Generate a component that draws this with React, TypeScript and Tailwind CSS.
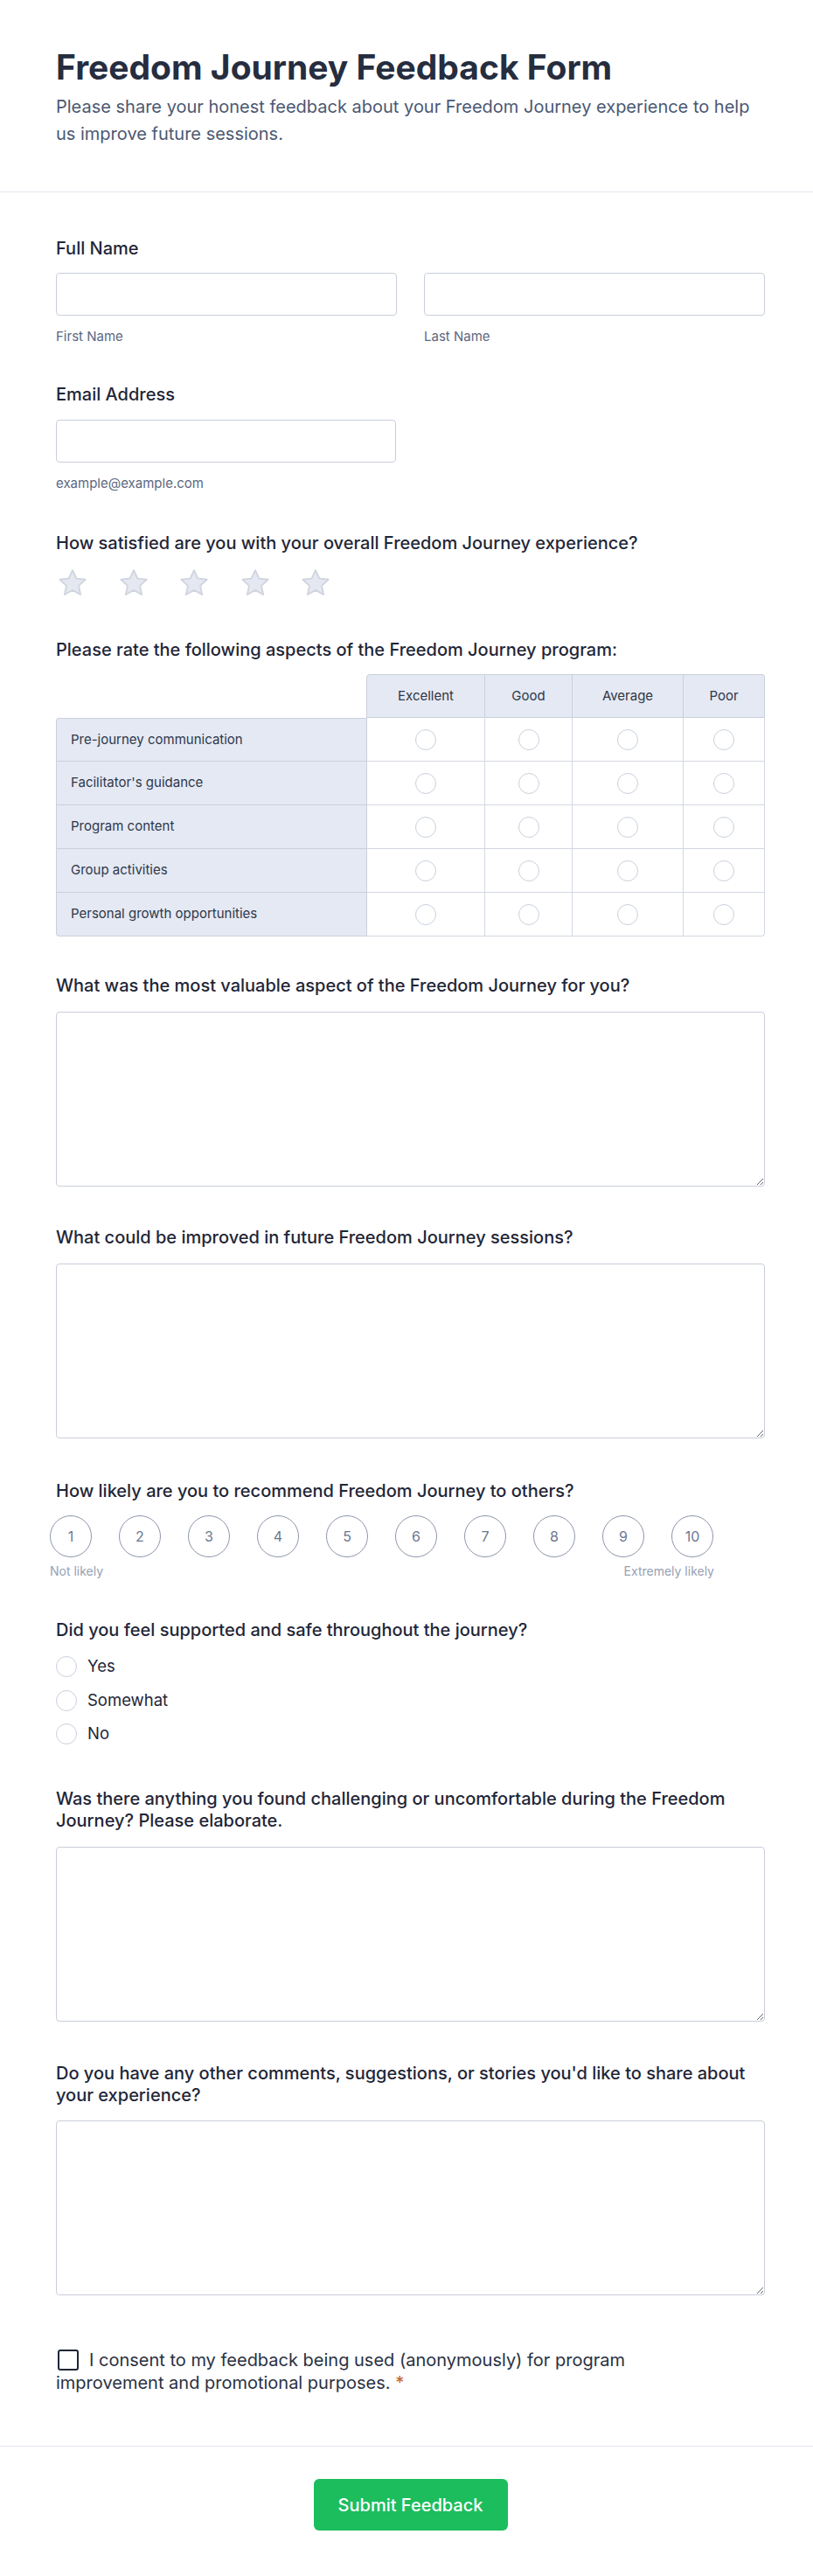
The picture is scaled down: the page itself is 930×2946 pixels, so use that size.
import React from 'react';

const aspects = [
  'Pre-journey communication',
  "Facilitator's guidance",
  'Program content',
  'Group activities',
  'Personal growth opportunities',
];

const scale = ['Excellent', 'Good', 'Average', 'Poor'];

const Star: React.FC = () => (
  <svg width="38" height="38" viewBox="0 0 24 24" aria-hidden="true">
    <path
      d="M12 2.6l2.8 6 6.45.75-4.8 4.45 1.3 6.4L12 17l-5.75 3.2 1.3-6.4-4.8-4.45 6.45-.75z"
      fill="#e5e8f0"
      stroke="#d0d5df"
      strokeWidth="1.2"
      strokeLinejoin="round"
    />
  </svg>
);

const Radio: React.FC = () => <span className="inline-block h-6 w-6 shrink-0 rounded-full border border-[#c9d0dc] bg-white" />;

const Label: React.FC<{ children: React.ReactNode; className?: string }> = ({ children, className = '' }) => (
  <p className={`text-xl font-medium text-[#1f2637] ${className}`}>{children}</p>
);

const TextBox: React.FC<{ className?: string }> = ({ className = '' }) => (
  <textarea className={`block h-[200px] w-full rounded border border-[#c9ceda] bg-white ${className}`} />
);

export default function App() {
  return (
    <div className="min-h-screen bg-white" style={{ fontFamily: 'Inter, "Noto Sans", sans-serif' }}>
      <header className="border-b border-[#e2e6ee] pb-[50px] pl-16 pr-[55px] pt-[57px]">
        <h1 className="text-[39px] font-bold leading-10 text-[#262d3f]">Freedom Journey Feedback Form</h1>
        <p className="mt-[10px] text-xl leading-[31px] text-[#4b5873]">
          Please share your honest feedback about your Freedom Journey experience to help us improve future sessions.
        </p>
      </header>

      <main className="pb-[59px] pl-16 pr-[55px] pt-[50px]">
        {/* Full name */}
        <Label className="leading-7">Full Name</Label>
        <div className="mt-[14px] grid grid-cols-2 gap-[31px]">
          <div>
            <input className="block h-[49px] w-full rounded border border-[#c9ceda]" />
            <p className="mt-[14px] text-[15px] leading-5 text-[#5b6780]">First Name</p>
          </div>
          <div>
            <input className="block h-[49px] w-full rounded border border-[#c9ceda]" />
            <p className="mt-[14px] text-[15px] leading-5 text-[#5b6780]">Last Name</p>
          </div>
        </div>

        {/* Email */}
        <Label className="mt-[42px] leading-7">Email Address</Label>
        <input className="mt-[15px] block h-[49px] w-[389px] rounded border border-[#c9ceda]" />
        <p className="mt-[14px] text-[15px] leading-5 text-[#5b6780]">example@example.com</p>

        {/* Stars */}
        <Label className="mt-[44px] leading-7">How satisfied are you with your overall Freedom Journey experience?</Label>
        <div className="mt-[13px] flex gap-[31.5px]">
          {[1, 2, 3, 4, 5].map((n) => (
            <Star key={n} />
          ))}
        </div>

        {/* Matrix */}
        <Label className="mt-[43px] leading-7">Please rate the following aspects of the Freedom Journey program:</Label>
        <div className="mt-[14px] grid grid-cols-[355px_136px_100px_127px_1fr] text-[15px] text-[#2f3747]">
          <div />
          {scale.map((s, i) => (
            <div
              key={s}
              className={`flex h-[50px] items-center justify-center border-b border-r border-t border-[#c9d0dc] bg-[#e5e9f4] ${
                i === 0 ? 'rounded-tl border-l' : ''
              } ${i === scale.length - 1 ? 'rounded-tr' : ''}`}
            >
              {s}
            </div>
          ))}
          {aspects.map((a, r) => (
            <React.Fragment key={a}>
              <div
                className={`flex h-[50px] items-center border-b border-l border-[#c9d0dc] bg-[#e5e9f4] pl-4 ${
                  r === 0 ? 'rounded-tl border-t' : ''
                } ${r === aspects.length - 1 ? 'rounded-bl' : ''}`}
              >
                {a}
              </div>
              {scale.map((s, i) => (
                <div
                  key={s}
                  className={`flex h-[50px] items-center justify-center border-b border-r border-[#d3d8e2] ${
                    i === 0 ? 'border-l border-l-[#c9d0dc]' : ''
                  } ${r === aspects.length - 1 && i === scale.length - 1 ? 'rounded-br' : ''}`}
                >
                  <Radio />
                </div>
              ))}
            </React.Fragment>
          ))}
        </div>

        {/* Open questions */}
        <Label className="mt-[42px] leading-7">What was the most valuable aspect of the Freedom Journey for you?</Label>
        <TextBox className="mt-[16px]" />

        <Label className="mt-[44px] leading-7">What could be improved in future Freedom Journey sessions?</Label>
        <TextBox className="mt-[16px]" />

        {/* NPS */}
        <Label className="mt-[46px] leading-7">How likely are you to recommend Freedom Journey to others?</Label>
        <div className="-ml-[7px] mt-[14px] w-[760px]">
          <div className="flex gap-[31px]">
            {[1, 2, 3, 4, 5, 6, 7, 8, 9, 10].map((n) => (
              <span
                key={n}
                className="flex h-12 w-12 items-center justify-center rounded-full border border-[#8d97ab] text-base text-[#6b7891]"
              >
                {n}
              </span>
            ))}
          </div>
          <div className="mt-1.5 flex justify-between text-sm leading-5 text-[#97a1b3]">
            <span>Not likely</span>
            <span>Extremely likely</span>
          </div>
        </div>

        {/* Support */}
        <Label className="mt-[43px] leading-7">Did you feel supported and safe throughout the journey?</Label>
        <div className="mt-[14px] flex flex-col gap-[10.5px]">
          {['Yes', 'Somewhat', 'No'].map((o) => (
            <div key={o} className="flex h-7 items-center gap-3 text-[18.5px] text-[#1f2637]">
              <Radio />
              <span>{o}</span>
            </div>
          ))}
        </div>

        <Label className="mt-[48px] leading-[25px]">
          Was there anything you found challenging or uncomfortable during the Freedom Journey? Please elaborate.
        </Label>
        <TextBox className="mt-[17px]" />

        <Label className="mt-[47px] leading-[25px]">
          Do you have any other comments, suggestions, or stories you'd like to share about your experience?
        </Label>
        <TextBox className="mt-[16px]" />

        {/* Consent */}
        <p className="mt-[61px] max-w-2xl text-xl leading-[26px] text-[#2a3142]">
          <span className="ml-0.5 mr-3 inline-block h-6 w-6 rounded-[3px] border-2 border-[#1f2637] align-[-5px]" />
          I consent to my feedback being used (anonymously) for program improvement and promotional purposes.{' '}
          <span className="text-[#c2612c]">*</span>
        </p>
      </main>

      <footer className="border-t border-[#e2e6ee] pb-[50px] pl-16 pr-[55px] pt-[37px]">
        <div className="flex justify-center">
          <button className="h-[59px] w-[222px] rounded-md bg-[#1cbd5d] text-xl font-medium text-white">Submit Feedback</button>
        </div>
      </footer>
    </div>
  );
}
